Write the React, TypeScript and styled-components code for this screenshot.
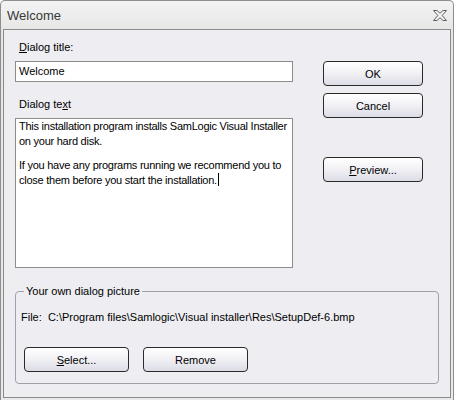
import React from "react"
import styled, { createGlobalStyle } from "styled-components"

const GlobalStyle = createGlobalStyle`
  html, body {
    margin: 0;
    padding: 0;
    background: #ffffff;
  }
  body {
    font-family: "Liberation Sans", Arial, sans-serif;
    font-size: 11px;
    color: #000;
  }
`

const Window = styled.div`
  width: 454px;
  height: 400px;
  box-sizing: border-box;
  display: flex;
  flex-direction: column;
  background: linear-gradient(#f3f3f3, #e6e6e6 30px, #e9e9ec);
  border-radius: 5px 5px 0 0;
  border: 1px solid #8d8d8d;
  border-bottom: none;
  overflow: hidden;
`

const TitleBar = styled.div`
  height: 28px;
  flex: none;
  display: flex;
  align-items: center;
  justify-content: space-between;
  padding: 0 5px 0 6px;
  font-size: 13px;
  color: #383838;
`

const CloseIcon = () => (
  <svg width="16" height="13" viewBox="0 0 16 13">
    <path
      d="M1.5 1.5 H5 L8 4.3 L11 1.5 H14.5 L10.2 6.5 L14.5 11.5 H11 L8 8.7 L5 11.5 H1.5 L5.8 6.5 Z"
      fill="#f4f4f4"
      stroke="#5e5e5e"
      strokeWidth="1"
      strokeLinejoin="round"
    />
  </svg>
)

const Body = styled.div`
  flex: 1;
  margin: 0 2px 2px 2px;
  border: 1px solid #8a8a8a;
  background: #eeeef2;
  padding: 9px 11px 0 11px;
  display: flex;
  flex-direction: column;
`

const Top = styled.div`
  display: flex;
  gap: 30px;
`

const LeftColumn = styled.div`
  width: 278px;
  display: flex;
  flex-direction: column;
`

const RightColumn = styled.div`
  padding-top: 22px;
  display: flex;
  flex-direction: column;
  gap: 7px;
`

const Label = styled.div<{ $top?: number }>`
  padding-left: 4px;
  margin-top: ${(p) => p.$top ?? 0}px;
  height: 22px;
  line-height: 16px;
  color: #000;
`

const Underline = styled.span`
  text-decoration: underline;
`

const Field = styled.div<{ $height: number }>`
  box-sizing: border-box;
  height: ${(p) => p.$height}px;
  border: 1px solid #8c8c8c;
  background: #fff;
  padding: 2px 3px;
  line-height: 14px;
`

const TextArea = styled(Field)`
  padding: 0 2px 2px 3px;
  line-height: 15px;
  letter-spacing: -0.25px;
`

const Para = styled.p`
  margin: 0 0 9px 0;
`

const Caret = styled.span`
  display: inline-block;
  width: 1px;
  height: 13px;
  margin-left: 1px;
  background: #000;
  vertical-align: -2px;
`

const Button = styled.div<{ $width: number; $spacer?: number }>`
  box-sizing: border-box;
  width: ${(p) => p.$width}px;
  height: 25px;
  margin-top: ${(p) => p.$spacer ?? 0}px;
  border: 1px solid #2a2a2a;
  border-radius: 4px;
  background: linear-gradient(#ffffff, #f2f2f6 45%, #dcdce6);
  display: flex;
  align-items: center;
  justify-content: center;
  font-size: 11px;
  color: #000;
`

const Group = styled.fieldset`
  margin: 17px 0 0 0;
  padding: 13px 4px 12px 4px;
  border: 1px solid #a0a0a8;
  border-radius: 4px;
  height: 99px;
  box-sizing: border-box;
`

const Legend = styled.legend`
  padding: 0 2px;
  margin-left: 4px;
  color: #000;
`

const FileLine = styled.div`
  padding-left: 1px;
  line-height: 14px;
`

const ButtonRow = styled.div`
  display: flex;
  gap: 14px;
  margin-top: 23px;
  padding-left: 4px;
`

export default function App() {
  return (
    <>
      <GlobalStyle />
      <Window>
        <TitleBar>
          <span>Welcome</span>
          <CloseIcon />
        </TitleBar>
        <Body>
          <Top>
            <LeftColumn>
              <Label>
                <Underline>D</Underline>ialog title:
              </Label>
              <Field $height={21}>Welcome</Field>
              <Label $top={14}>
                Dialog te<Underline>x</Underline>t
              </Label>
              <TextArea $height={150}>
                <Para>
                  This installation program installs SamLogic Visual Installer
                  on your hard disk.
                </Para>
                <Para>
                  If you have any programs running we recommend you to close
                  them before you start the installation.
                  <Caret />
                </Para>
              </TextArea>
            </LeftColumn>
            <RightColumn>
              <Button $width={100}>OK</Button>
              <Button $width={100}>Cancel</Button>
              <Button $width={100} $spacer={32}>
                <span>
                  <Underline>P</Underline>review...
                </span>
              </Button>
            </RightColumn>
          </Top>
          <Group>
            <Legend>Your own dialog picture</Legend>
            <FileLine>
              File:&nbsp;&nbsp;C:\Program files\Samlogic\Visual installer\Res\SetupDef-6.bmp
            </FileLine>
            <ButtonRow>
              <Button $width={105}>
                <span>
                  <Underline>S</Underline>elect...
                </span>
              </Button>
              <Button $width={105}>Remove</Button>
            </ButtonRow>
          </Group>
        </Body>
      </Window>
    </>
  )
}
